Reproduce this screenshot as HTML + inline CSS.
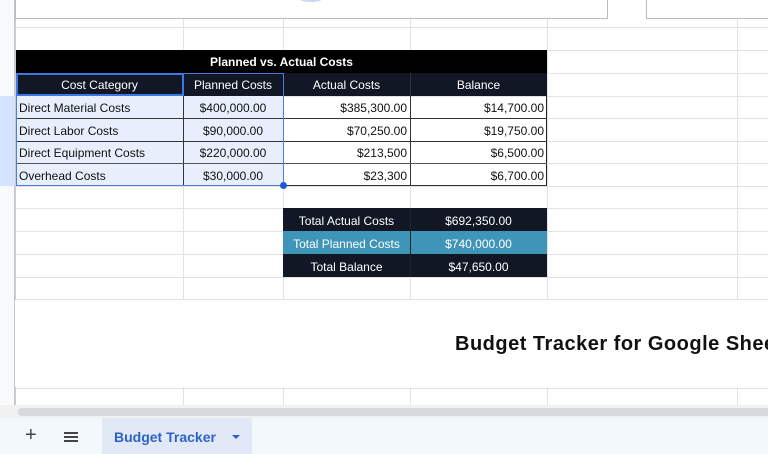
<!DOCTYPE html>
<html><head><style>
*{margin:0;padding:0;box-sizing:border-box}
body{width:768px;height:454px;overflow:hidden;background:#fff;font-family:"Liberation Sans",Arial,sans-serif;position:relative}
.a{position:absolute}
.h{position:absolute;left:0;width:768px;height:1px;background:#e2e2e2}
.v{position:absolute;top:0;width:1px;height:405px;background:#e2e2e2}
.c{position:absolute;font-size:12px;line-height:24px;white-space:nowrap;color:#111}
</style></head><body>
<div class="h" style="top:27px"></div><div class="h" style="top:50px"></div><div class="h" style="top:73px"></div>
<div class="h" style="top:96px"></div><div class="h" style="top:118px"></div><div class="h" style="top:141px"></div>
<div class="h" style="top:163px"></div><div class="h" style="top:186px"></div><div class="h" style="top:208px"></div>
<div class="h" style="top:231px"></div><div class="h" style="top:254px"></div><div class="h" style="top:277px"></div>
<div class="h" style="top:299px"></div><div class="h" style="top:388px"></div>
<div class="v" style="left:15px;background:#ccc"></div><div class="v" style="left:183px"></div><div class="v" style="left:283px"></div>
<div class="v" style="left:410px"></div><div class="v" style="left:547px"></div><div class="v" style="left:737px"></div>
<div class="a" style="left:0;top:0;width:15px;height:405px;background:#f8f9fa;border-right:1px solid #c4c7c5"></div>
<div class="a" style="left:0;top:96px;width:15px;height:90px;background:#d3e3fd"></div>
<div class="a" style="left:15px;top:-2px;width:593px;height:21px;border:1px solid #bbb;border-top:none;background:#fff"></div>
<div class="a" style="left:646px;top:-2px;width:130px;height:21px;border:1px solid #bbb;border-top:none;background:#fff"></div>
<div class="a" style="left:300px;top:-4px;width:22px;height:6px;border-radius:50%;background:#c6d8f5"></div>
<div class="a c" style="left:16px;top:50px;width:531px;height:23px;background:#000;color:#fff;font-weight:bold;text-align:center;line-height:25px">Planned vs. Actual Costs</div>
<div class="a" style="left:16px;top:73px;width:531px;height:23px;background:#121726"></div>
<div class="c" style="left:16px;top:73px;width:167px;text-align:center;color:#fff">Cost Category</div>
<div class="c" style="left:183px;top:73px;width:100px;text-align:center;color:#fff">Planned Costs</div>
<div class="c" style="left:283px;top:73px;width:127px;text-align:center;color:#fff">Actual Costs</div>
<div class="c" style="left:410px;top:73px;width:137px;text-align:center;color:#fff">Balance</div>
<div class="a" style="left:410px;top:73px;width:1px;height:113px;background:#333"></div>
<div class="a" style="left:16px;top:96px;width:267px;height:90px;background:#e8eefc"></div>
<div class="a" style="left:283px;top:96px;width:264px;height:90px;border-right:1px solid #222"></div>
<div class="a" style="left:183px;top:96px;width:1px;height:90px;background:#333"></div>
<div class="a" style="left:16px;top:118px;width:531px;height:1px;background:#333"></div>
<div class="a" style="left:16px;top:141px;width:531px;height:1px;background:#333"></div>
<div class="a" style="left:16px;top:163px;width:531px;height:1px;background:#555"></div>
<div class="a" style="left:16px;top:185px;width:531px;height:1px;background:#333"></div>
<div class="c" style="left:19px;top:96px">Direct Material Costs</div>
<div class="c" style="left:19px;top:119px">Direct Labor Costs</div>
<div class="c" style="left:19px;top:141px">Direct Equipment Costs</div>
<div class="c" style="left:19px;top:164px">Overhead Costs</div>
<div class="c" style="left:183px;top:96px;width:100px;text-align:center">$400,000.00</div>
<div class="c" style="left:183px;top:119px;width:100px;text-align:center">$90,000.00</div>
<div class="c" style="left:183px;top:141px;width:100px;text-align:center">$220,000.00</div>
<div class="c" style="left:183px;top:164px;width:100px;text-align:center">$30,000.00</div>
<div class="c" style="left:283px;top:96px;width:124px;text-align:right">$385,300.00</div>
<div class="c" style="left:283px;top:119px;width:124px;text-align:right">$70,250.00</div>
<div class="c" style="left:283px;top:141px;width:124px;text-align:right">$213,500</div>
<div class="c" style="left:283px;top:164px;width:124px;text-align:right">$23,300</div>
<div class="c" style="left:410px;top:96px;width:134px;text-align:right">$14,700.00</div>
<div class="c" style="left:410px;top:119px;width:134px;text-align:right">$19,750.00</div>
<div class="c" style="left:410px;top:141px;width:134px;text-align:right">$6,500.00</div>
<div class="c" style="left:410px;top:164px;width:134px;text-align:right">$6,700.00</div>
<div class="a" style="left:16px;top:73px;width:268px;height:113px;border:1px solid #4a7fe0"></div>
<div class="a" style="left:16px;top:73px;width:168px;height:23px;border:2px solid #3b78e7"></div>
<div class="a" style="left:280px;top:182px;width:7px;height:7px;border-radius:50%;background:#1a5ad7"></div>
<div class="a" style="left:283px;top:208px;width:264px;height:69px;background:#121726"></div>
<div class="a" style="left:283px;top:231px;width:264px;height:23px;background:#3f95b8"></div>
<div class="a" style="left:410px;top:208px;width:1px;height:69px;background:#222"></div>
<div class="c" style="left:283px;top:209px;width:127px;text-align:center;color:#fff">Total Actual Costs</div>
<div class="c" style="left:283px;top:232px;width:127px;text-align:center;color:#fff">Total Planned Costs</div>
<div class="c" style="left:283px;top:255px;width:127px;text-align:center;color:#fff">Total Balance</div>
<div class="c" style="left:410px;top:209px;width:137px;text-align:center;color:#fff">$692,350.00</div>
<div class="c" style="left:410px;top:232px;width:137px;text-align:center;color:#fff">$740,000.00</div>
<div class="c" style="left:410px;top:255px;width:137px;text-align:center;color:#fff">$47,650.00</div>
<div class="a" style="left:0;top:300px;width:768px;height:87px;background:#fff"></div>
<div class="a" style="left:0;top:300px;width:15px;height:88px;background:#f8f9fa;border-right:1px solid #c4c7c5"></div>
<div class="a" style="left:455px;top:333px;font-size:20px;font-weight:bold;color:#111;white-space:nowrap;letter-spacing:0.5px">Budget Tracker for Google Sheets</div>
<div class="a" style="left:0;top:405px;width:768px;height:13px;background:#f1f1f1"></div>
<div class="a" style="left:18px;top:408px;width:760px;height:8px;border-radius:4px;background:#d7d8da"></div>
<div class="a" style="left:0;top:418px;width:768px;height:36px;background:#f3f8fd"></div>
<div class="a" style="left:25px;top:424px;font-size:20px;color:#444">+</div>
<div class="a" style="left:64px;top:432px;width:14px;height:2px;background:#444;box-shadow:0 4px 0 #444,0 8px 0 #444"></div>
<div class="a" style="left:102px;top:418px;width:150px;height:36px;background:#e1e9f7"></div>
<div class="a" style="left:114px;top:429px;font-size:14px;font-weight:bold;color:#2e62c6">Budget Tracker</div>
<div class="a" style="left:232px;top:435px;width:0;height:0;border-left:4px solid transparent;border-right:4px solid transparent;border-top:4px solid #2e62c6"></div>
</body></html>
